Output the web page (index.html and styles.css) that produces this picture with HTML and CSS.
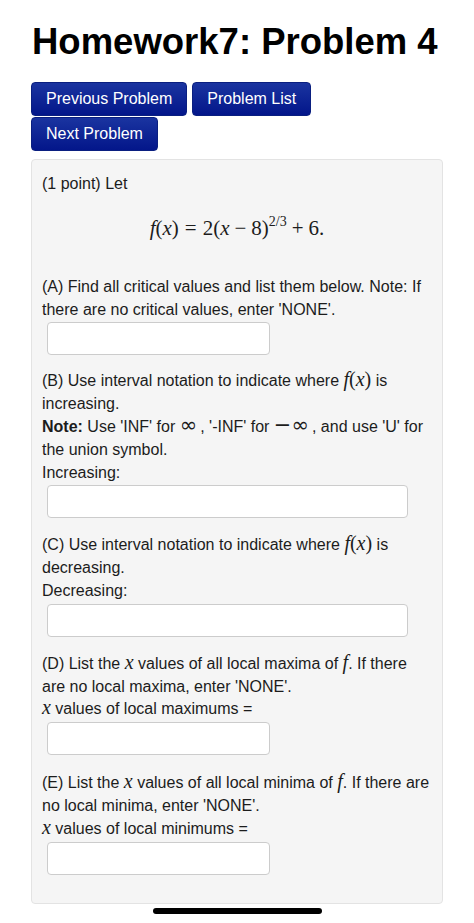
FILE: index.html
```html
<!DOCTYPE html>
<html lang="en">
<head>
    <meta charset="UTF-8">
    <meta name="viewport" content="width=device-width, initial-scale=1.0">
    <title>Homework7: Problem 4</title>
    <link rel="stylesheet" href="styles.css">
</head>
<body>

    <h1 class="title">Homework7: Problem 4</h1>

    <!-- Problem navigation -->
    <div class="nav">
        <a class="nav-btn" href="#">Previous Problem</a>
        <a class="nav-btn" href="#">Problem List</a>
        <a class="nav-btn" href="#">Next Problem</a>
    </div>

    <!-- Problem body (line breaks follow the original page) -->
    <div class="problem">
        <p>(1 point) Let</p>
        <div class="formula"><i>f</i>(<i>x</i>)<span class="rel">=</span>2(<i>x</i><span class="bin">&minus;</span>8)<sup>2/3</sup><span class="bin">+</span>6.</div>

        <div class="part part-a">
            <p>(A) Find all critical values and list them below. Note: If<br>
            there are no critical values, enter 'NONE'.</p>
            <input type="text" class="answer short">
        </div>

        <div class="part part-b">
            <p>(B) Use interval notation to indicate where&nbsp;<span class="math"><i>f</i>(<i>x</i>)</span> is<br>
            increasing.<br>
            <strong>Note:</strong> Use 'INF' for <span class="inf">&infin;</span>, '-INF' for <span class="inf">&minus;&infin;</span>, and use 'U' for<br>
            the union symbol.<br>
            Increasing:</p>
            <input type="text" class="answer long">
        </div>

        <div class="part part-c">
            <p>(C) Use interval notation to indicate where&nbsp;<span class="math"><i>f</i>(<i>x</i>)</span> is<br>
            decreasing.<br>
            Decreasing:</p>
            <input type="text" class="answer long">
        </div>

        <div class="part part-d">
            <p>(D) List the <span class="math"><i>x</i></span> values of all local maxima of <span class="math"><i>f</i></span>. If there<br>
            are no local maxima, enter 'NONE'.<br>
            <span class="math"><i>x</i></span> values of local maximums =</p>
            <input type="text" class="answer short">
        </div>

        <div class="part part-e">
            <p>(E) List the <span class="math"><i>x</i></span> values of all local minima of <span class="math"><i>f</i></span>. If there are<br>
            no local minima, enter 'NONE'.<br>
            <span class="math"><i>x</i></span> values of local minimums =</p>
            <input type="text" class="answer short">
        </div>
    </div>

    <div class="home-bar"></div>

</body>
</html>
```

FILE: styles.css
```css
/* Page */
body {
    font-family: "Liberation Sans", Arial, sans-serif;
    background-color: #fff;
    color: #1c1c1c;
    margin: 0;
    padding: 22px 31px 0 31px;
}

.title {
    font-size: 36.5px;
    line-height: 40px;
    font-weight: bold;
    color: #000;
    margin: 0 0 20px 1px;
}

/* Navigation buttons */
.nav {
    display: flex;
    flex-wrap: wrap;
    column-gap: 5px;
    row-gap: 1px;
    max-width: 400px;
    margin-bottom: 8px;
}

.nav-btn {
    display: block;
    height: 34px;
    line-height: 32px;
    padding: 0 14px;
    font-size: 16px;
    color: #fff;
    text-decoration: none;
    background: linear-gradient(#1a34a0, #03168a);
    border: 1px solid #0a1f80;
    border-radius: 4px;
    box-sizing: border-box;
}

/* Problem box */
.problem {
    background-color: #f5f5f5;
    border: 1px solid #e3e3e3;
    border-radius: 4px;
    padding: 13px 10px 28px 10px;
    font-size: 16px;
    line-height: 22.8px;
}

.problem p {
    margin: 0;
    white-space: nowrap;
}

.formula {
    font-family: "Liberation Serif", "Times New Roman", serif;
    font-size: 21px;
    text-align: center;
    margin-top: 21px;
    line-height: 23px;
}

.formula sup {
    font-size: 14px;
    line-height: 0;
    vertical-align: 9px;
}

.formula .rel {
    margin: 0 6px;
}

.formula .bin {
    margin: 0 5px;
}

.math {
    font-family: "Liberation Serif", "Times New Roman", serif;
    font-size: 20px;
    line-height: 0;
}

.inf {
    font-family: "DejaVu Sans", sans-serif;
    font-size: 21px;
    line-height: 0;
    margin-right: 3px;
}

.part-a { margin-top: 36px; }
.part-b { margin-top: 15px; }
.part-c { margin-top: 16px; }
.part-d { margin-top: 16px; }
.part-e { margin-top: 17px; }

.answer {
    display: block;
    height: 33px;
    margin: 1px 0 0 5px;
    background: #fff;
    border: 1px solid #ccc;
    border-radius: 4px;
    box-sizing: border-box;
}

.answer.short {
    width: 223px;
}

.answer.long {
    width: 361px;
}

/* iOS home indicator */
.home-bar {
    position: fixed;
    left: 153px;
    bottom: 9px;
    width: 169px;
    height: 6px;
    border-radius: 3px;
    background: #000;
}
```
